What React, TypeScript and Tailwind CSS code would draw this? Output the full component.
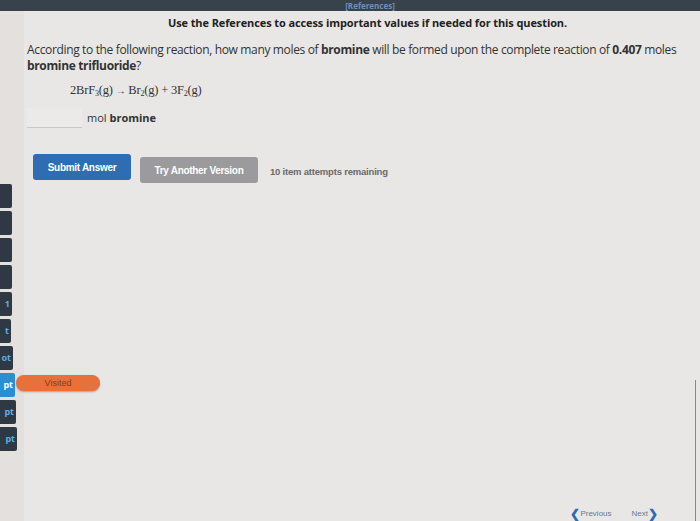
import React from "react";

const tiles = [
  { w: 12, label: "", active: false },
  { w: 12, label: "", active: false },
  { w: 12, label: "", active: false },
  { w: 12, label: "", active: false },
  { w: 12, label: "1", active: false },
  { w: 11, label: "t", active: false },
  { w: 13, label: "ot", active: false },
  { w: 15, label: "pt", active: true },
  { w: 16, label: "pt", active: false },
  { w: 17, label: "pt", active: false },
];

export default function App() {
  return (
    <div
      className="relative w-[700px] h-[521px] overflow-hidden bg-[#e8e7e5] flex flex-col"
      style={{ fontFamily: '"Open Sans", "Liberation Sans", sans-serif' }}
    >
      {/* top dark bar */}
      <div className="h-[11px] bg-[#38424d] flex justify-center items-end shrink-0">
        <span className="ml-[40px] text-[8px] font-bold text-[#6d8fb8] leading-[10px]">
          [References]
        </span>
      </div>

      <div className="flex flex-1 min-h-0">
        {/* left sidebar */}
        <div className="w-[24px] shrink-0 bg-[#e3e0de] flex flex-col pt-[173px] gap-[3px]">
          {tiles.map((t, i) => (
            <div
              key={i}
              className={`h-[24px] rounded-r-[2px] overflow-hidden flex items-center justify-end pr-[2px] text-[9px] font-bold whitespace-nowrap ${
                t.active ? "bg-[#2c8dd3] text-white" : "bg-[#2e3944] text-[#5aaee0]"
              }`}
              style={{ width: t.w }}
            >
              {t.label}
            </div>
          ))}
        </div>

        {/* main */}
        <div className="flex-1 flex flex-col pl-[3px] pr-[10px]">
          <div className="mt-[4px] text-center pl-[18px] text-[11px] font-bold text-[#222] tracking-[-0.1px]">
            Use the References to access important values if needed for this question.
          </div>

          <p className="mt-[10px] text-[12px] leading-[16px] text-[#333] tracking-[-0.35px]">
            According to the following reaction, how many moles of <b>bromine</b> will be formed upon the complete reaction of{" "}
            <b>0.407</b> moles <b>bromine trifluoride</b>?
          </p>

          <div
            className="mt-[7px] ml-[43px] text-[12.5px] text-[#333] tracking-[-0.2px]"
            style={{ fontFamily: '"Liberation Serif", serif' }}
          >
            2BrF<sub className="text-[8px]">3</sub>(g) <span className="text-[10px]">→</span> Br<sub className="text-[8px]">2</sub>(g) + 3F
            <sub className="text-[8px]">2</sub>(g)
          </div>

          <div className="mt-[9px] flex items-end gap-[5px]">
            <div className="w-[55px] h-[20px] bg-[#ebeae8] border-b border-[#c9c9c9]"></div>
            <span className="text-[11px] text-[#333] mb-[2px]">
              mol <b>bromine</b>
            </span>
          </div>

          <div className="mt-[26px] ml-[6px] flex items-start">
            <div className="w-[98px] h-[26px] rounded-[3px] bg-[#2f6db3] text-white text-[10px] font-bold flex items-center justify-center tracking-[-0.3px]"
              style={{ fontFamily: '"Liberation Sans", sans-serif' }}>
              Submit Answer
            </div>
            <div className="ml-[9px] mt-[3px] w-[118px] h-[26px] rounded-[3px] bg-[#9b9b9d] text-white text-[10px] font-bold flex items-center justify-center tracking-[-0.3px]"
              style={{ fontFamily: '"Liberation Sans", sans-serif' }}>
              Try Another Version
            </div>
            <span className="ml-[12px] mt-[11px] text-[9.5px] font-bold text-[#6a6a6a] tracking-[-0.2px]"
              style={{ fontFamily: '"Liberation Sans", sans-serif' }}>
              10 item attempts remaining
            </span>
          </div>

          <div className="mt-[192px] -ml-[11px] w-[84px] h-[16px] rounded-full bg-[#e8703a] shadow-[0_1px_2px_rgba(0,0,0,0.3)] flex items-center justify-center text-[9px] text-[#8a3c1c]"
            style={{ fontFamily: '"Liberation Sans", sans-serif' }}>
            Visited
          </div>

          <div className="mt-auto mb-[1px] flex justify-end pr-[32px] gap-[20px] text-[8px] text-[#6a7a8a]"
            style={{ fontFamily: '"Liberation Sans", sans-serif' }}>
            <span className="flex items-center"><span className="text-[#2a6bb5] text-[12px] font-bold leading-none">❮</span>Previous</span>
            <span className="flex items-center">Next<span className="text-[#2a6bb5] text-[12px] font-bold leading-none">❯</span></span>
          </div>
        </div>
      </div>
      <div className="absolute right-[4px] top-[380px] bottom-0 w-[1px] bg-[#8a8a8a]"></div>
    </div>
  );
}
